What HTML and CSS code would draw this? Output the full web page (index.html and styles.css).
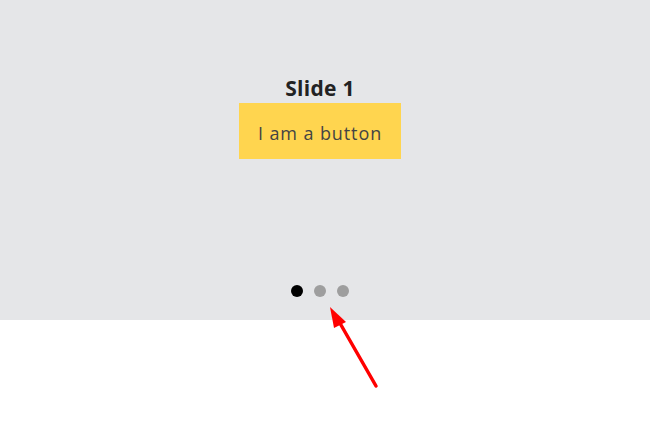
FILE: index.html
```html
<!DOCTYPE html>
<html lang="en">
<head>
  <meta charset="UTF-8">
  <title>Slider</title>
  <link rel="stylesheet" href="styles.css">
</head>
<body>
  <div class="slider">
    <div class="slide">
      <h2 class="slide-title">Slide 1</h2>
      <button class="slide-btn">I am a button</button>
    </div>
    <div class="dots">
      <span class="dot active"></span>
      <span class="dot"></span>
      <span class="dot"></span>
    </div>
  </div>

  <svg class="arrow" width="650" height="427" viewBox="0 0 650 427">
    <line x1="376" y1="386" x2="337" y2="318" stroke="#ff0000" stroke-width="3.5" stroke-linecap="round"/>
    <polygon points="330,307 346,322 334,328" fill="#ff0000"/>
  </svg>
</body>
</html>
```

FILE: styles.css
```css
* { margin: 0; padding: 0; box-sizing: border-box; }
html, body {
  font-family: "Open Sans", "Noto Sans", sans-serif;
  background: #fff;
}

.slider {
  height: 320px;
  padding-right: 10px;
  background: #e5e6e8;
  display: flex;
  flex-direction: column;
  align-items: center;
}

.slide {
  display: flex;
  flex-direction: column;
  align-items: center;
  padding-top: 74px;
  flex: 1;
}

.slide-title {
  font-size: 21px;
  font-weight: 700;
  color: #222;
  line-height: 28px;
  letter-spacing: 0.3px;
}

.slide-btn {
  margin-top: 1px;
  padding-top: 3px;
  width: 162px;
  height: 56px;
  background: #ffd54f;
  border: none;
  color: #444;
  font-family: inherit;
  font-size: 18px;
  letter-spacing: 0.9px;
}

.dots {
  display: flex;
  gap: 11px;
  padding-bottom: 23px;
}

.dot {
  width: 12px;
  height: 12px;
  border-radius: 50%;
  background: #9e9e9e;
}

.dot.active { background: #000; }

.arrow {
  position: absolute;
  top: 0;
  left: 0;
  pointer-events: none;
}
```
